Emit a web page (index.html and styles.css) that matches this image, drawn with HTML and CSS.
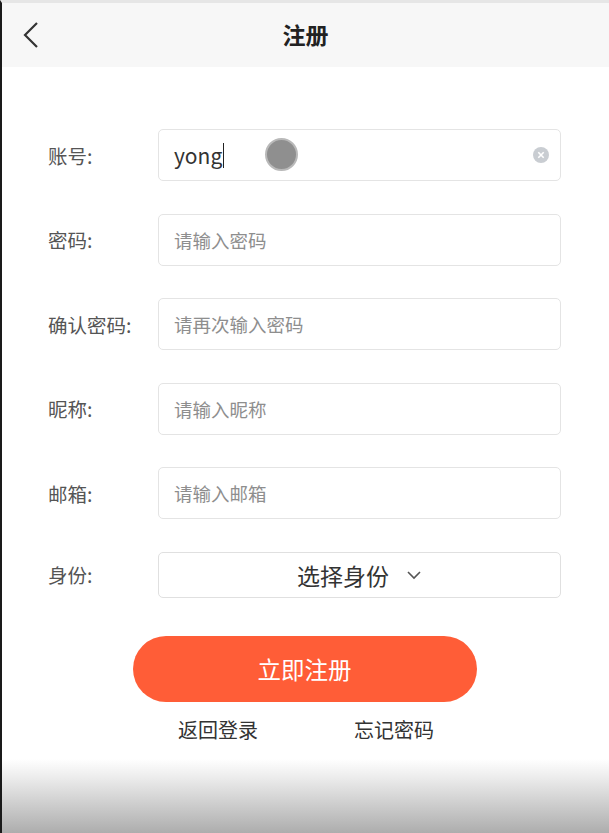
FILE: index.html
```html
<!doctype html>
<html lang="zh-CN">
	<head>
		<meta charset="UTF-8">
		<title>注册</title>
		<link rel="stylesheet" href="styles.css">
	</head>
	<body>
		<div class="page">
			<div class="header">
				<a href="#" class="back">
					<svg width="18" height="28" viewBox="0 0 18 28"><path d="M15 2 L3 14 L15 26" fill="none" stroke="#333" stroke-width="2.2"/></svg>
				</a>
				<h1 class="title">注册</h1>
			</div>
			<div class="form">
				<div class="row">
					<label class="label">账号:</label>
					<div class="field filled">
						<span class="value">yong</span><span class="caret"></span>
						<span class="touch"></span>
						<span class="clear">
							<svg width="16" height="16" viewBox="0 0 16 16"><circle cx="8" cy="8" r="8" fill="#c9cdd2"/><path d="M5.3 5.3 L10.7 10.7 M10.7 5.3 L5.3 10.7" stroke="#fff" stroke-width="1.6"/></svg>
						</span>
					</div>
				</div>
				<div class="row">
					<label class="label">密码:</label>
					<input type="password" class="field" placeholder="请输入密码">
				</div>
				<div class="row">
					<label class="label">确认密码:</label>
					<input type="password" class="field" placeholder="请再次输入密码">
				</div>
				<div class="row">
					<label class="label">昵称:</label>
					<input type="text" class="field" placeholder="请输入昵称">
				</div>
				<div class="row">
					<label class="label">邮箱:</label>
					<input type="text" class="field" placeholder="请输入邮箱">
				</div>
				<div class="row">
					<label class="label">身份:</label>
					<div class="select">
						<span>选择身份</span>
						<svg width="16" height="10" viewBox="0 0 16 10"><path d="M2 2 L8 8 L14 2" fill="none" stroke="#555" stroke-width="1.6"/></svg>
					</div>
				</div>
				<button class="submit">立即注册</button>
				<div class="links">
					<a href="#">返回登录</a>
					<a href="#">忘记密码</a>
				</div>
			</div>
			<div class="shade"></div>
		</div>
	</body>
</html>
```

FILE: styles.css
```css
*{margin:0;padding:0;box-sizing:border-box;}
body{
	background:#fff;
	font-family:"Noto Sans CJK SC","Noto Sans",sans-serif;
	color:#333;
}
.page{
	width:609px;height:833px;
	border-left:2px solid #1a1a1a;
	border-top:3px solid #e6e6e6;
	display:flex;
	flex-direction:column;
	overflow:hidden;
}
.header{
	height:64px;
	background:#f7f7f7;
	display:flex;
	align-items:center;
	justify-content:center;
	position:relative;
}
.back{
	position:absolute;
	left:20px;top:18px;
}
.title{
	font-size:23px;
	font-weight:bold;
	color:#222;
	margin-top:-3px;
}
.form{
	padding:62px 48px 0 46px;
	display:flex;
	flex-direction:column;
	gap:32.6px;
}
.row{
	display:flex;
	align-items:center;
}
.label{
	width:110px;
	font-size:19.5px;
	color:#555;
}
.field{
	flex:1;
	height:52px;
	border:1px solid #e4e4e4;
	border-radius:5px;
	padding:0 15px;
	font-family:inherit;
	font-size:18.5px;
	color:#333;
	outline:none;
	background:#fff;
}
.field::placeholder{color:#8e8e8e;}
.filled{
	display:flex;
	align-items:center;
	position:relative;
}
.value{font-size:21px;color:#333;}
.caret{
	width:1px;height:25px;
	background:#222;
	margin-left:1px;
}
.touch{
	position:absolute;
	left:106px;top:8px;
	width:33px;height:33px;
	border-radius:50%;
	background:#8f8f8f;
	border:2px solid #b9b9b9;
}
.clear{
	margin-left:auto;
	margin-right:-4px;
	display:flex;
}
.select{
	flex:1;
	height:46px;
	border:1px solid #e0e0e0;
	border-radius:5px;
	display:flex;
	align-items:center;
	justify-content:center;
	gap:17px;
	font-size:23px;
	color:#333;
}
.submit{
	align-self:center;
	width:344px;height:66px;
	margin-top:5px;
	border:0;
	border-radius:33px;
	background:#ff5d37;
	color:#fff;
	font-family:inherit;
	font-size:23.5px;
	cursor:pointer;
}
.links{
	display:flex;
	justify-content:space-between;
	margin:-19px 127px 0 130px;
}
.links a{
	font-size:20px;
	color:#333;
	text-decoration:none;
}
.shade{
	margin-top:auto;
	height:74px;
	background:linear-gradient(#fff,#ececec 25%,#adadad);
}
```
